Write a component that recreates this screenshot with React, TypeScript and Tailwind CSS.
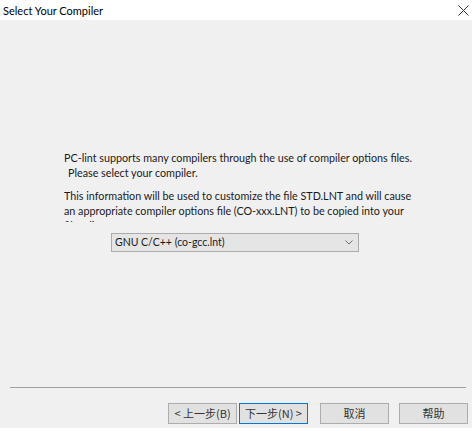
import React from 'react';

const FONT = "font-['Lato','Noto_Sans','Noto_Sans_CJK_SC',sans-serif]";

const WizardButton: React.FC<{ label: string; primary?: boolean }> = ({ label, primary }) => (
  <button
    type="button"
    className={`w-[69px] h-[21px] flex items-center justify-center font-['Noto_Sans_CJK_SC',sans-serif] text-[11px] leading-none text-[#333] bg-[#e1e1e1] border ${
      primary ? 'border-[#0078d7]' : 'border-[#adadad]'
    }`}
  >
    {label}
  </button>
);

export default function App() {
  return (
    <div className={`w-[474px] h-[431px] bg-white flex flex-col overflow-hidden ${FONT}`}>
      {/* Title bar */}
      <div className="h-[20px] flex items-center justify-between pl-[3px] pr-[5px]">
        <span className="text-[11px] text-black leading-none">Select Your Compiler</span>
        <svg width="11" height="11" viewBox="0 0 11 11" className="text-[#333]">
          <path d="M0.5 0.5 L10.5 10.5 M10.5 0.5 L0.5 10.5" stroke="currentColor" strokeWidth="1" />
        </svg>
      </div>

      {/* Body */}
      <div className="flex-1 bg-[#f0f0f0] mr-[2px] mb-[3px] flex flex-col">
        <div className="pt-[130px] pl-[64px]">
          <div className="h-[71.5px] overflow-hidden text-[10.75px] leading-[15px] text-[#1a1a1a] whitespace-nowrap">
            <p>PC-lint supports many compilers through the use of compiler options files.</p>
            <p className="pl-[4px]">Please select your compiler.</p>
            <p className="mt-[8px]">This information will be used to customize the file STD.LNT and will cause</p>
            <p>an appropriate compiler options file (CO-xxx.LNT) to be copied into your</p>
            <p>files directory.</p>
          </div>
        </div>

        {/* Compiler select */}
        <div className="mt-[11.5px] ml-[111px] w-[248px] h-[19px] bg-[#e5e5e5] border border-[#acacac] flex items-center justify-between pl-[3px] pr-[5px]">
          <span className="text-[10.5px] leading-none text-[#1a1a1a]">GNU C/C++ (co-gcc.lnt)</span>
          <svg width="8" height="5" viewBox="0 0 8 5" className="text-[#707070]">
            <path d="M0.5 0.5 L4 4 L7.5 0.5" fill="none" stroke="currentColor" strokeWidth="1" />
          </svg>
        </div>

        <div className="flex-1" />

        {/* Separator */}
        <div className="ml-[10px] mr-[6px] border-t border-[#a0a0a0]" />

        {/* Buttons */}
        <div className="flex items-center pl-[168px] pt-[15px] pb-[4px]">
          <WizardButton label="< 上一步(B)" />
          <div className="ml-[2px]">
            <WizardButton label="下一步(N) >" primary />
          </div>
          <div className="ml-[12px]">
            <WizardButton label="取消" />
          </div>
          <div className="ml-[10px]">
            <WizardButton label="帮助" />
          </div>
        </div>
      </div>
    </div>
  );
}
